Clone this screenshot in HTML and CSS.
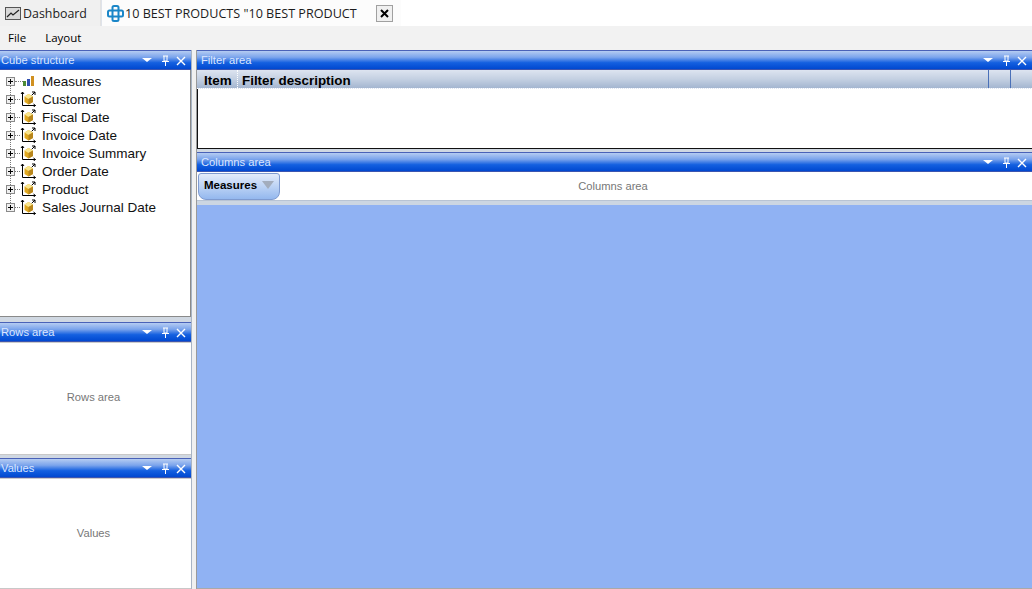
FILE: index.html
```html
<!DOCTYPE html>
<html lang="en">
<head>
    <meta name="viewport" content="width=device-width, initial-scale=1.0" />
    <title>Cube browser</title>
    <link rel="stylesheet" href="styles.css">
</head>
<body>
    <svg class="defs" width="0" height="0">
        <symbol id="dim" viewBox="0 0 16 16">
            <path d="M2.5 1V14.5H15.5M1 3L2.5 1L4 3M13.5 13L15.5 14.5L13.5 16M11.5 4.5L15 1M12 1H15V4" fill="none" stroke="#000" stroke-width="1"/>
            <path d="M4.5 5.5L8.5 3L13 5.5V11L8.5 13.5L4.5 11Z" fill="#e0a820"/>
            <path d="M4.5 5.5L8.5 8L13 5.5L8.5 3Z" fill="#f8e48c"/>
            <path d="M8.5 8V13.5L13 11V5.5Z" fill="#b8861c"/>
        </symbol>
        <symbol id="plus" viewBox="0 0 9 9">
            <rect x="0.5" y="0.5" width="8" height="8" fill="#f0f0f0" stroke="#8a8a8a"/>
            <path d="M2 4.5H7M4.5 2V7" stroke="#000"/>
        </symbol>
        <symbol id="tools" viewBox="0 0 48 12">
            <path d="M0 3H10L5 7Z" fill="#fff"/>
            <path d="M21 1H26M22 1V6H25V1M20 6.5H27M23.5 7V11" fill="none" stroke="#fff"/>
            <path d="M35 2L43 10M43 2L35 10" fill="none" stroke="#fff" stroke-width="1.4"/>
        </symbol>
    </svg>

    <div class="tabbar">
        <div class="tab tab-dash">
            <svg class="dash-icon" width="16" height="13" viewBox="0 0 16 13">
                <rect x="0.5" y="0.5" width="15" height="12" fill="#d8d8d8" stroke="#555"/>
                <path d="M2 10L6 6L8 8L14 3" fill="none" stroke="#222" stroke-width="1.2"/>
            </svg>
            <span>Dashboard</span>
        </div>
        <div class="tab tab-report">
            <svg class="report-icon" width="17" height="17" viewBox="0 0 17 17">
                <rect x="1" y="5.5" width="15" height="6" rx="1.5" fill="none" stroke="#1a86c8" stroke-width="2"/>
                <rect x="5.5" y="1" width="6" height="15" rx="1.5" fill="none" stroke="#1a86c8" stroke-width="2"/>
            </svg>
            <span>10 BEST PRODUCTS "10 BEST PRODUCT</span>
            <button class="tab-close">
                <svg width="9" height="9" viewBox="0 0 9 9"><path d="M1 1L8 8M8 1L1 8" stroke="#000" stroke-width="2"/></svg>
            </button>
        </div>
    </div>

    <div class="menubar">
        <span>File</span>
        <span>Layout</span>
    </div>

    <div class="workspace">
        <div class="left-col">
            <section class="panel cube-panel">
                <div class="panel-title"><span>Cube structure</span><svg class="tools"><use href="#tools"/></svg></div>
                <div class="tree">
                    <div class="tree-row">
                        <svg class="plus"><use href="#plus"/></svg><i class="dots"></i>
                        <svg class="bars" width="12" height="10" viewBox="0 0 12 10">
                            <rect x="0" y="5" width="3" height="5" fill="#4c8a34"/>
                            <rect x="4" y="3" width="3" height="7" fill="#3050b0"/>
                            <rect x="8" y="0" width="3" height="10" fill="#d09020"/>
                        </svg>
                        <span>Measures</span>
                    </div>
                    <div class="tree-row"><svg class="plus"><use href="#plus"/></svg><i class="dots short"></i><svg class="dim"><use href="#dim"/></svg><span>Customer</span></div>
                    <div class="tree-row"><svg class="plus"><use href="#plus"/></svg><i class="dots short"></i><svg class="dim"><use href="#dim"/></svg><span>Fiscal Date</span></div>
                    <div class="tree-row"><svg class="plus"><use href="#plus"/></svg><i class="dots short"></i><svg class="dim"><use href="#dim"/></svg><span>Invoice Date</span></div>
                    <div class="tree-row"><svg class="plus"><use href="#plus"/></svg><i class="dots short"></i><svg class="dim"><use href="#dim"/></svg><span>Invoice Summary</span></div>
                    <div class="tree-row"><svg class="plus"><use href="#plus"/></svg><i class="dots short"></i><svg class="dim"><use href="#dim"/></svg><span>Order Date</span></div>
                    <div class="tree-row"><svg class="plus"><use href="#plus"/></svg><i class="dots short"></i><svg class="dim"><use href="#dim"/></svg><span>Product</span></div>
                    <div class="tree-row last"><svg class="plus"><use href="#plus"/></svg><i class="dots short"></i><svg class="dim"><use href="#dim"/></svg><span>Sales Journal Date</span></div>
                </div>
            </section>
            <section class="panel rows-panel">
                <div class="panel-title"><span>Rows area</span><svg class="tools"><use href="#tools"/></svg></div>
                <div class="panel-empty">Rows area</div>
            </section>
            <section class="panel values-panel">
                <div class="panel-title"><span>Values</span><svg class="tools"><use href="#tools"/></svg></div>
                <div class="panel-empty">Values</div>
            </section>
        </div>

        <div class="right-col">
            <section class="panel filter-panel">
                <div class="panel-title"><span>Filter area</span><svg class="tools"><use href="#tools"/></svg></div>
                <div class="filter-head">
                    <div class="fh-item">Item</div>
                    <div class="fh-desc">Filter description</div>
                    <div class="fh-small"></div>
                    <div class="fh-end"></div>
                </div>
                <div class="filter-body"></div>
            </section>
            <section class="panel columns-panel">
                <div class="panel-title"><span>Columns area</span><svg class="tools"><use href="#tools"/></svg></div>
                <div class="columns-body">
                    <div class="field-chip"><b>Measures</b><i class="chip-arrow"></i></div>
                    <div class="columns-label">Columns area</div>
                </div>
            </section>
            <div class="grid-area"></div>
        </div>
    </div>
</body>
</html>
```

FILE: styles.css
```css
* {
    padding: 0;
    margin: 0;
    box-sizing: border-box;
}
html, body {
    width: 1032px;
    height: 589px;
    overflow: hidden;
}
body {
    font-family: "Liberation Sans", Arial, sans-serif;
    background-color: #f0f0f0;
    display: flex;
    flex-direction: column;
    color: #000;
}
.defs {
    position: absolute;
}
.tabbar {
    height: 26px;
    display: flex;
    background-color: #fff;
    font-family: "Open Sans", sans-serif;
    font-size: 12.6px;
    flex-shrink: 0;
}
.tab {
    display: flex;
    align-items: center;
    height: 26px;
}
.tab-dash {
    width: 101px;
    padding-left: 5px;
    background-color: #f0f0f0;
    border-right: 1px solid #e2e2e2;
    font-size: 12.4px;
    color: #222;
}
.dash-icon {
    margin-right: 2px;
}
.tab-report {
    width: 300px;
    padding-left: 5px;
    color: #1c1c1c;
    border-left: 1px solid #dfe3ea;
    background-color: #fcfcfc;
}
.report-icon {
    margin-right: 1px;
}
.tab-close {
    width: 17px;
    height: 17px;
    margin-left: 19px;
    background-color: #f0f0f0;
    border: 1px solid #a0a0a0;
    display: flex;
    align-items: center;
    justify-content: center;
}
.menubar {
    height: 24px;
    flex-shrink: 0;
    display: flex;
    align-items: center;
    gap: 19px;
    padding: 0 0 2px 8px;
    font-family: "Open Sans", sans-serif;
    font-size: 11.5px;
    background-color: #f2f2f2;
}
.workspace {
    flex: 1;
    display: flex;
    min-height: 0;
}
.left-col {
    width: 192px;
    display: flex;
    flex-direction: column;
    flex-shrink: 0;
    border-right: 1px solid #a8b4c4;
    background-color: #d0d8e2;
}
.right-col {
    flex: 1;
    display: flex;
    flex-direction: column;
    border-left: 1px solid #9a9a9a;
    margin-left: 4px;
    min-width: 0;
    background-color: #d0d8e2;
}
.panel {
    display: flex;
    flex-direction: column;
    background-color: #fff;
}
.panel-title {
    height: 20px;
    flex-shrink: 0;
    display: flex;
    align-items: center;
    justify-content: space-between;
    padding: 0 1px 0 1px;
    font-size: 11.2px;
    color: #dbe6ff;
    border-top: 1px solid #4a62b8;
    border-bottom: 1px solid #3c55b0;
    background: linear-gradient(#b5ccf2 0%, #7ba4ec 35%, #1460e0 65%, #0048d0 100%);
}
.right-col .panel-title {
    padding-left: 4px;
}
.tools {
    width: 48px;
    height: 12px;
    margin-top: 1px;
}
.cube-panel {
    height: 267px;
}
.tree {
    flex: 1;
    border: 1px solid #8a8a8a;
    border-width: 0 1px 1px 0;
    padding-top: 2px;
    font-size: 13.5px;
    color: #111;
}
.tree-row {
    height: 18px;
    display: flex;
    align-items: center;
    padding-left: 6px;
    position: relative;
}
.tree-row::before {
    content: "";
    position: absolute;
    left: 10px;
    top: 13px;
    height: 14px;
    border-left: 1px dotted #777;
}
.tree-row.last::before {
    display: none;
}
.plus {
    width: 9px;
    height: 9px;
    flex-shrink: 0;
    position: relative;
    z-index: 1;
}
.dots {
    width: 8px;
    border-top: 1px dotted #777;
}
.dots.short {
    width: 5px;
}
.bars {
    margin-right: 7px;
}
.dim {
    width: 16px;
    height: 16px;
    margin-right: 6px;
    flex-shrink: 0;
}
.rows-panel {
    margin-top: 5px;
    height: 133px;
}
.values-panel {
    margin-top: 3px;
    flex: 1;
}
.panel-empty {
    flex: 1;
    display: flex;
    align-items: center;
    justify-content: center;
    padding: 0 4px 3px 0;
    font-size: 11.2px;
    color: #777;
    border-top: 1px solid #ccc;
    border-bottom: 1px solid #c8c8c8;
}
.values-panel .panel-empty {
    padding-bottom: 1px;
}
.filter-panel {
    height: 99px;
    border-bottom: 1px solid #111;
}
.filter-head {
    height: 19px;
    display: flex;
    flex-shrink: 0;
    font-size: 13.4px;
    font-weight: bold;
    line-height: 21px;
    background: linear-gradient(#dde4f0, #c4d0e2 50%, #a4b6d0);
    border-bottom: 1px dotted #fff;
}
.fh-item {
    width: 41px;
    padding-left: 7px;
    border-right: 1px dotted #fff;
}
.fh-desc {
    width: 751px;
    padding-left: 4px;
    border-right: 1px solid #4a70b8;
}
.fh-small {
    width: 22px;
    border-right: 1px solid #4a70b8;
}
.fh-end {
    flex: 1;
}
.filter-body {
    flex: 1;
    border-left: 1px solid #111;
}
.columns-panel {
    margin-top: 3px;
    height: 49px;
}
.columns-body {
    flex: 1;
    display: flex;
    align-items: flex-start;
    border-bottom: 1px solid #b8c4d4;
}
.field-chip {
    width: 82px;
    height: 27px;
    margin: 1px 0 0 1px;
    flex-shrink: 0;
    display: flex;
    align-items: center;
    padding: 0 0 3px 5px;
    font-size: 11.5px;
    border: 1px solid #7f9bd0;
    border-radius: 3px 3px 8px 8px;
    background: linear-gradient(#e4ecfa, #b8d0f4 55%, #94b8ee);
}
.chip-arrow {
    width: 0;
    height: 0;
    margin-left: 5px;
    border-style: solid;
    border-width: 8px 6px 0 6px;
    border-color: #a3adbd transparent transparent transparent;
}
.columns-label {
    flex: 1;
    text-align: center;
    font-size: 11.2px;
    color: #777;
    line-height: 28px;
    padding-right: 86px;
}
.grid-area {
    flex: 1;
    background-color: #90b2f3;
    border-top: 4px solid #ccd6e2;
    border-bottom: 1px solid #a9a9a9;
}
```
